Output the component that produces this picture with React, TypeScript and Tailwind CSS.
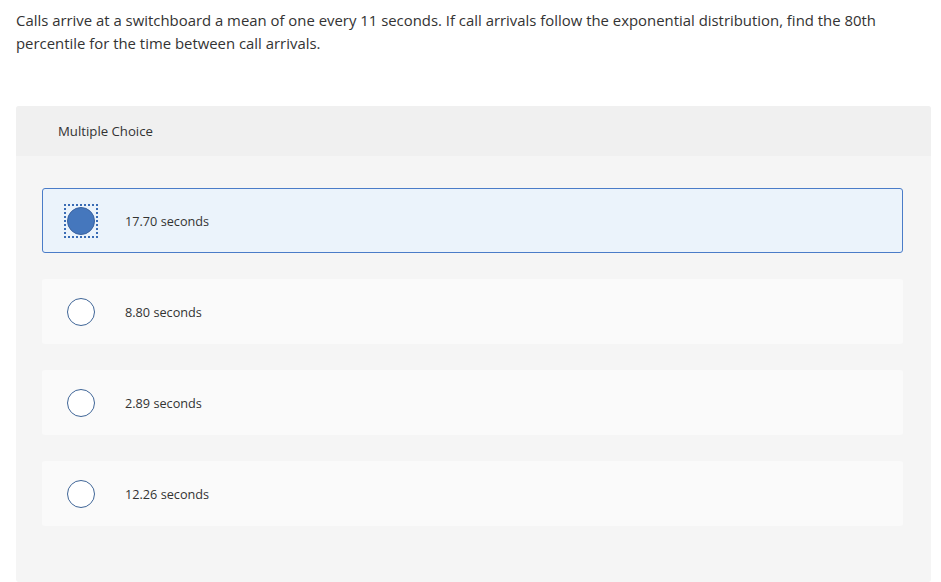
import React from "react";

const options = ["17.70 seconds", "8.80 seconds", "2.89 seconds", "12.26 seconds"];

export default function App() {
  return (
    <div className="w-[941px] h-[582px] bg-white overflow-hidden text-[#222]" style={{ fontFamily: '"Open Sans", "Liberation Sans", sans-serif' }}>
      <p className="pl-[16px] pr-[40px] pt-[9px] text-[14.9px] leading-[23px] text-[#333]">
        Calls arrive at a switchboard a mean of one every 11 seconds. If call arrivals follow the exponential distribution, find the 80th percentile for the time between call arrivals.
      </p>
      <div className="ml-[16px] mt-[51px] w-[915px] h-[476px] rounded-[3px] bg-[#f5f5f5] overflow-hidden">
        <div className="h-[50px] bg-[#f0f0f0] pl-[42px] pt-[1px] flex items-center text-[13.2px] text-[#333]">Multiple Choice</div>
        <div className="pt-[32px] pl-[26px] pr-[28px] flex flex-col gap-[26px]">
          {options.map((o, i) => {
            const sel = i === 0;
            return (
              <div
                key={o}
                className={
                  sel
                    ? "h-[65px] rounded-[3px] border border-[#4a7cc8] bg-[#ebf3fb] flex items-center pl-[21px]"
                    : "h-[65px] rounded-[3px] bg-[#fafafa] flex items-center pl-[22px]"
                }
              >
                <div className={sel ? "w-[34px] h-[34px] border-2 border-dotted border-[#3a6cb5] flex items-center justify-center" : "w-[34px] h-[34px] flex items-center justify-center"}>
                  {sel ? (
                    <div className="w-[28px] h-[28px] rounded-full bg-[#4577bd] border border-[#3a62a0]" />
                  ) : (
                    <div className="w-[28px] h-[28px] rounded-full bg-white border-[1.5px] border-[#3f6597]" />
                  )}
                </div>
                <span className="ml-[27px] pt-[2px] text-[12.7px] text-[#333]">{o}</span>
              </div>
            );
          })}
        </div>
      </div>
    </div>
  );
}
